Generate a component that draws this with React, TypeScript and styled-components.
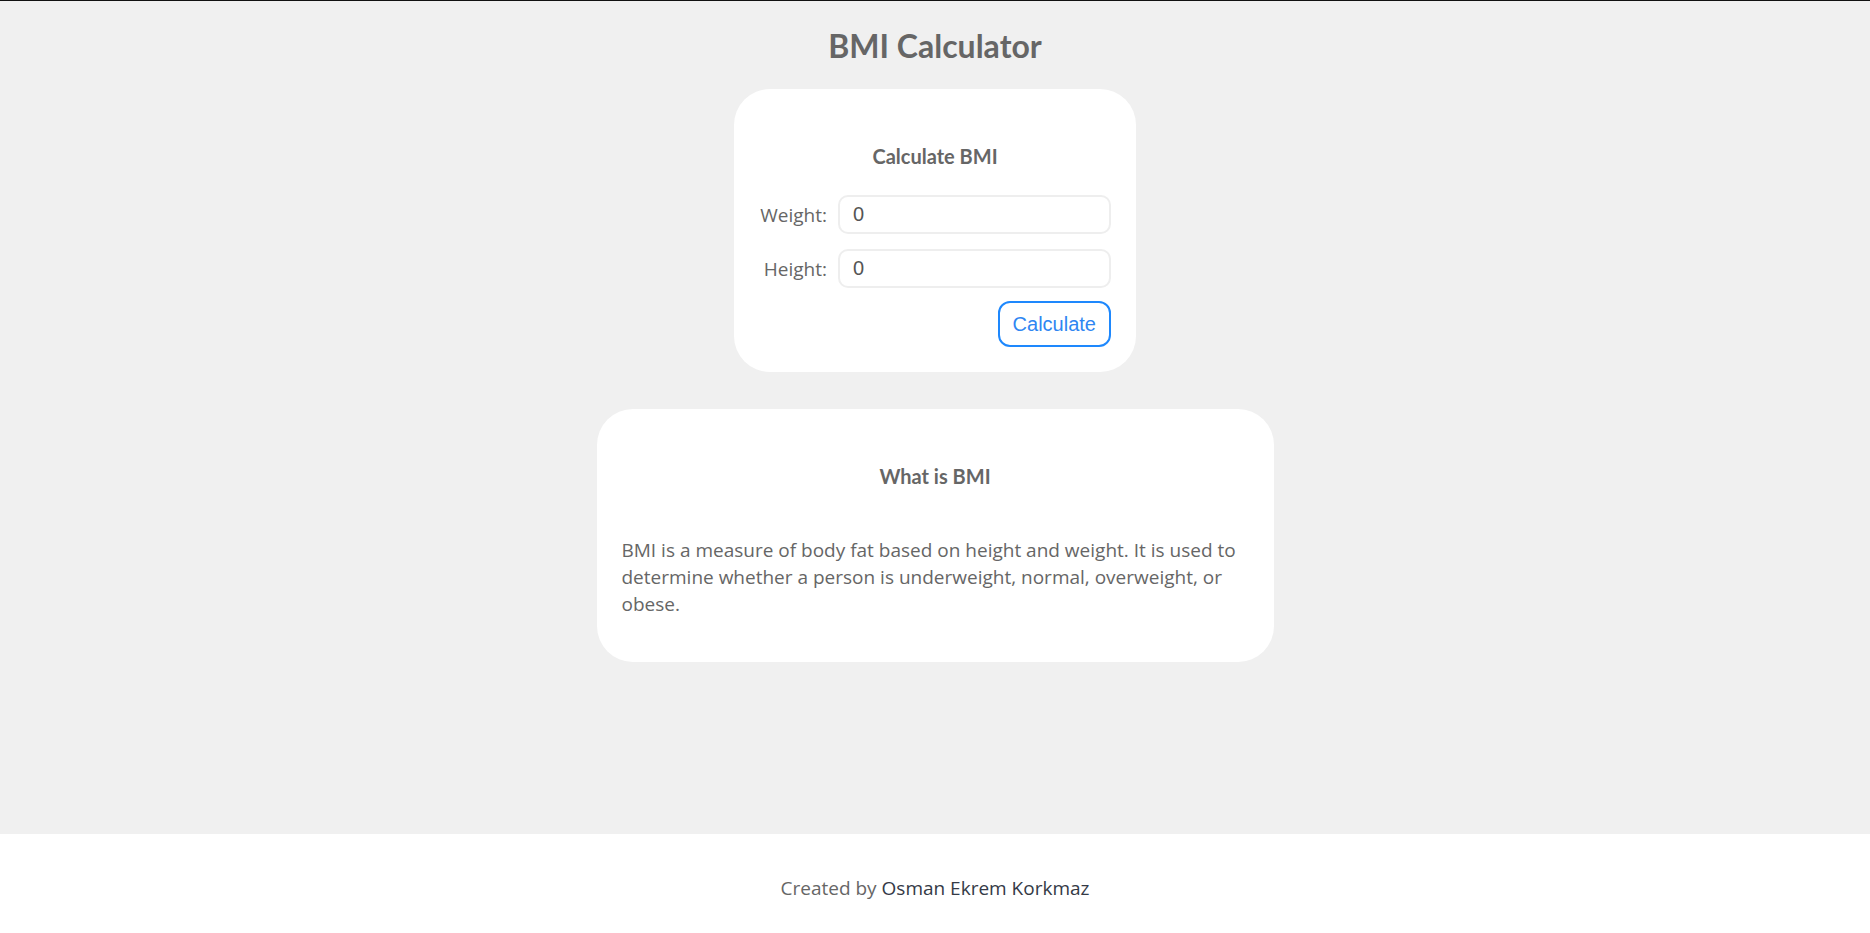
import styled, { createGlobalStyle } from "styled-components";

const GlobalStyles = createGlobalStyle`
  *, *::before, *::after {
    box-sizing: border-box;
  }
  body {
    margin: 0;
    background: #f0f0f0;
    font-family: "Open Sans", "Noto Sans", sans-serif;
    color: #666;
  }
`;

const Page = styled.div`
  min-height: 100vh;
  display: flex;
  flex-direction: column;
  border-top: 1px solid #111;
`;

const Main = styled.main`
  flex: 1;
  display: flex;
  flex-direction: column;
  align-items: center;
`;

const Title = styled.h1`
  font-family: Lato, "Open Sans", sans-serif;
  font-size: 32px;
  line-height: 40px;
  font-weight: 700;
  color: #666;
  margin: 25px 0 23px;
`;

const Card = styled.section<{ $width: number }>`
  width: ${(p) => p.$width}px;
  background: white;
  border-radius: 36px;
  padding: 25px;
  margin-bottom: 37px;
`;

const CardTitle = styled.h3<{ $gap?: number }>`
  font-family: Lato, "Open Sans", sans-serif;
  font-size: 20px;
  line-height: 26px;
  font-weight: 700;
  text-align: center;
  color: #666;
  margin: 29px 0 ${(p) => p.$gap ?? 26}px;
`;

const Form = styled.form`
  display: flex;
  flex-direction: column;
  gap: 15px;
`;

const Row = styled.div`
  display: flex;
  align-items: center;
  justify-content: flex-end;
  gap: 11px;
`;

const Label = styled.label`
  font-size: 19px;
  color: #666;
`;

const Input = styled.input`
  width: 273px;
  height: 39px;
  border: 2px solid #eee;
  border-radius: 10px;
  padding: 0 13px;
  font-family: "Liberation Sans", Arial, sans-serif;
  font-size: 20px;
  color: #555;
  outline: none;
`;

const Actions = styled.div`
  display: flex;
  justify-content: flex-end;
  margin-top: -2px;
`;

const Button = styled.button`
  height: 46px;
  padding: 0 13px;
  background: white;
  border: 2px solid #1e88fd;
  border-radius: 12px;
  font-family: "Liberation Sans", Arial, sans-serif;
  font-size: 20px;
  color: #2f86f2;
  cursor: pointer;
`;

const Text = styled.p`
  font-size: 19px;
  line-height: 27px;
  color: #666;
  margin: 0 0 19px;
`;

const Footer = styled.footer`
  height: 99px;
  background: white;
  display: flex;
  align-items: center;
  justify-content: center;
  font-size: 19px;
  color: #666;
  padding-top: 8px;
`;

const Author = styled.span`
  color: #343a46;
`;

export default function App() {
  return (
    <>
      <GlobalStyles />
      <Page>
        <Main>
          <Title>BMI Calculator</Title>
          <Card $width={402}>
            <CardTitle>Calculate BMI</CardTitle>
            <Form onSubmit={(e) => e.preventDefault()}>
              <Row>
                <Label htmlFor="weight">Weight:</Label>
                <Input id="weight" type="text" defaultValue="0" />
              </Row>
              <Row>
                <Label htmlFor="height">Height:</Label>
                <Input id="height" type="text" defaultValue="0" />
              </Row>
              <Actions>
                <Button type="submit">Calculate</Button>
              </Actions>
            </Form>
          </Card>
          <Card $width={677}>
            <CardTitle $gap={48}>What is BMI</CardTitle>
            <Text>
              BMI is a measure of body fat based on height and weight. It is
              used to determine whether a person is underweight, normal,
              overweight, or obese.
            </Text>
          </Card>
        </Main>
        <Footer>
          Created by&nbsp;<Author>Osman Ekrem Korkmaz</Author>
        </Footer>
      </Page>
    </>
  );
}
